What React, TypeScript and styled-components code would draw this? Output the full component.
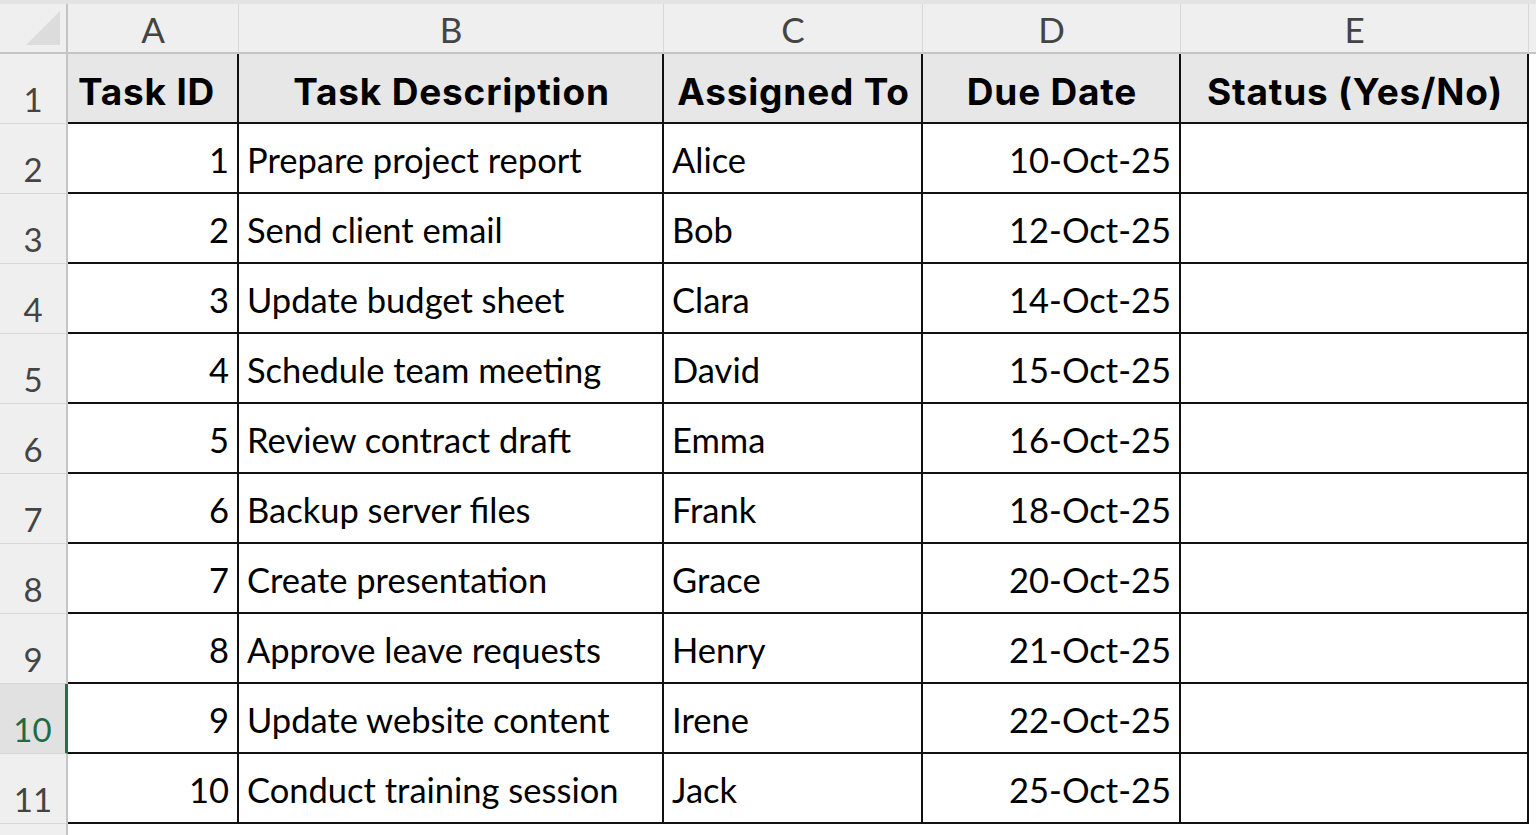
import React from "react";
import styled, { createGlobalStyle } from "styled-components";

const Global = createGlobalStyle`
  html, body { margin: 0; padding: 0; background: #ffffff; }
  body { font-family: "Lato", "Noto Sans", sans-serif; overflow: hidden; }
`;

const COLS = "68px 171px 425px 259px 258px 348px 1fr";

const Sheet = styled.div`
  width: 1536px;
  height: 835px;
  display: flex;
  flex-direction: column;
  background: #ffffff;
  border-top: 4px solid #e3e3e3;
  box-sizing: border-box;
  overflow: hidden;
`;

const Grid = styled.div`
  display: grid;
  grid-template-columns: ${COLS};
  grid-auto-rows: 70px;
  grid-template-rows: 50px;
`;

const Corner = styled.div`
  background: #efefef;
  border-bottom: 2px solid #c4c4c4;
  border-right: 2px solid #c4c4c4;
  display: flex;
  align-items: flex-end;
  justify-content: flex-end;
  padding: 0 6px 7px 0;
  box-sizing: border-box;
`;

const ColHead = styled.div`
  background: #efefef;
  border-bottom: 2px solid #c4c4c4;
  border-right: 1px solid #d8d8d8;
  color: #444;
  font-family: "Lato", sans-serif;
  font-size: 35px;
  line-height: 1;
  display: flex;
  align-items: flex-end;
  justify-content: center;
  box-sizing: border-box;
  padding-bottom: 5px;
`;

const RowHead = styled.div<{ $sel?: boolean }>`
  background: ${(p) => (p.$sel ? "#e1e1e1" : "#efefef")};
  color: ${(p) => (p.$sel ? "#1e6b45" : "#444")};
  border-bottom: 1px solid #d8d8d8;
  border-right: ${(p) => (p.$sel ? "3px solid #217346" : "2px solid #c4c4c4")};
  font-size: 33px;
  line-height: 1;
  display: flex;
  align-items: flex-end;
  justify-content: center;
  padding-bottom: 7px;
  box-sizing: border-box;
`;

const Cell = styled.div<{ $head?: boolean; $align?: "left" | "right" | "center" }>`
  background: ${(p) => (p.$head ? "#e7e7e7" : "#ffffff")};
  border-right: 2px solid #111;
  border-bottom: 2px solid #111;
  font-family: ${(p) => (p.$head ? '"Inter", "Lato", sans-serif' : '"Lato", sans-serif')};
  font-size: ${(p) => (p.$head ? "37px" : "34.5px")};
  letter-spacing: ${(p) => (p.$head ? "0.8px" : "0")};
  font-weight: ${(p) => (p.$head ? 700 : 400)};
  color: #000;
  display: flex;
  align-items: flex-end;
  justify-content: ${(p) =>
    p.$align === "right" ? "flex-end" : p.$align === "center" ? "center" : "flex-start"};
  padding: 0 8px ${(p) => (p.$head ? "12px" : "15px")} ${(p) => (p.$head ? "10px" : "8px")};
  box-sizing: border-box;
  white-space: nowrap;
  line-height: 1;
`;

const Blank = styled.div<{ $head?: boolean }>`
  background: ${(p) => (p.$head ? "#efefef" : "#ffffff")};
  border-bottom: ${(p) => (p.$head ? "2px solid #c4c4c4" : "none")};
`;

const Triangle = () => (
  <svg width="34" height="34" viewBox="0 0 34 34">
    <polygon points="34,0 34,34 0,34" fill="#dcdcdc" />
  </svg>
);

const rows: [number, string, string, string][] = [
  [1, "Prepare project report", "Alice", "10-Oct-25"],
  [2, "Send client email", "Bob", "12-Oct-25"],
  [3, "Update budget sheet", "Clara", "14-Oct-25"],
  [4, "Schedule team meeting", "David", "15-Oct-25"],
  [5, "Review contract draft", "Emma", "16-Oct-25"],
  [6, "Backup server files", "Frank", "18-Oct-25"],
  [7, "Create presentation", "Grace", "20-Oct-25"],
  [8, "Approve leave requests", "Henry", "21-Oct-25"],
  [9, "Update website content", "Irene", "22-Oct-25"],
  [10, "Conduct training session", "Jack", "25-Oct-25"],
];

export default function App() {
  return (
    <>
      <Global />
      <Sheet>
        <Grid>
          <Corner>
            <Triangle />
          </Corner>
          {["A", "B", "C", "D", "E"].map((c) => (
            <ColHead key={c}>{c}</ColHead>
          ))}
          <Blank $head />

          <RowHead>1</RowHead>
          <Cell $head>Task ID</Cell>
          <Cell $head $align="center">Task Description</Cell>
          <Cell $head $align="center">Assigned To</Cell>
          <Cell $head $align="center">Due Date</Cell>
          <Cell $head $align="center">Status (Yes/No)</Cell>
          <Blank />

          {rows.map((r, i) => (
            <React.Fragment key={r[0]}>
              <RowHead $sel={i + 2 === 10}>{i + 2}</RowHead>
              <Cell $align="right">{r[0]}</Cell>
              <Cell>{r[1]}</Cell>
              <Cell>{r[2]}</Cell>
              <Cell $align="right">{r[3]}</Cell>
              <Cell />
              <Blank />
            </React.Fragment>
          ))}
          <RowHead />
        </Grid>
      </Sheet>
    </>
  );
}
